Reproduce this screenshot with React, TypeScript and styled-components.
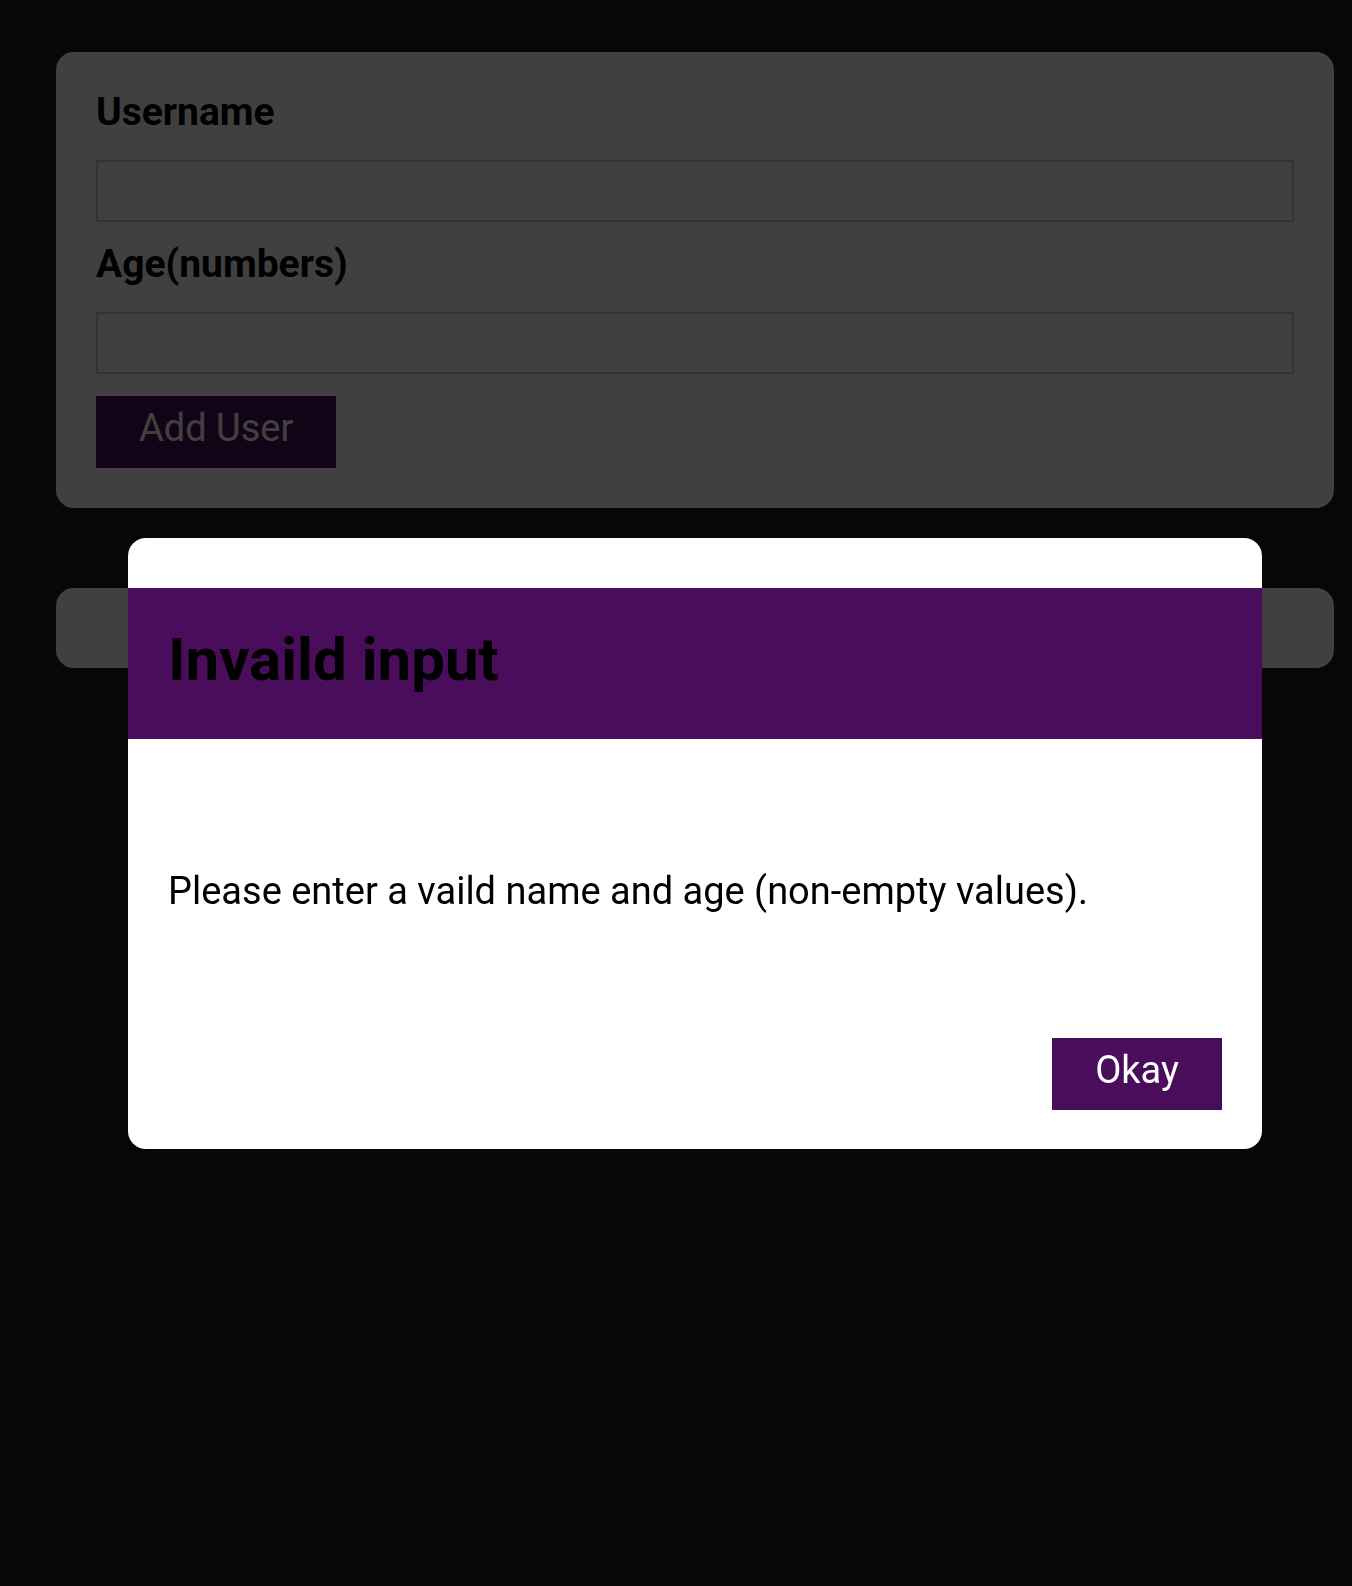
import styled, { createGlobalStyle } from "styled-components";

const GlobalStyle = createGlobalStyle`
  * {
    box-sizing: border-box;
  }

  html,
  body {
    margin: 0;
    padding: 0;
    background: #1f1f1f;
    font-family: Roboto, "Noto Sans CJK KR", sans-serif;
  }
`;

const Page = styled.div`
  min-height: 1586px;
  padding: 52px 18px 0 56px;
  display: flex;
  flex-direction: column;
  gap: 80px;
`;

const Card = styled.div`
  background: #ffffff;
  border-radius: 18px;
`;

const Form = styled.form`
  display: flex;
  flex-direction: column;
  padding: 37px 40px 40px;
`;

const Label = styled.label`
  display: block;
  font-size: 39px;
  line-height: 46px;
  font-weight: 700;
  color: #000;
  margin-bottom: 25px;
`;

const Input = styled.input`
  display: block;
  width: 100%;
  height: 62px;
  border: 2px solid #cccccc;
  background: #fff;
  font: inherit;
  margin-bottom: 19px;
  outline: none;
`;

const Button = styled.button`
  height: 72px;
  padding: 0 42px 8px;
  background: #4a0d5b;
  border: 1px solid #4a0d5b;
  color: #ffffff;
  font-family: inherit;
  font-size: 38px;
  line-height: 1;
  cursor: pointer;
`;

const ButtonRow = styled.div`
  display: flex;
  margin-top: 3px;
`;

const UserList = styled(Card)`
  height: 80px;
`;

const Backdrop = styled.div`
  position: fixed;
  inset: 0;
  background: rgba(0, 0, 0, 0.75);
  z-index: 10;
`;

const Modal = styled.div`
  position: fixed;
  top: 538px;
  left: 128px;
  width: 1134px;
  background: #ffffff;
  border-radius: 18px;
  overflow: hidden;
  padding-top: 50px;
  z-index: 100;
`;

const Header = styled.header`
  background: #4a0d5b;
  padding: 37px 40px 44px;

  h2 {
    margin: 0;
    font-size: 60px;
    line-height: 70px;
    font-weight: 700;
    color: #000;
  }
`;

const Content = styled.div`
  padding: 129px 40px 0;

  p {
    margin: 0;
    font-size: 38px;
    line-height: 46px;
    color: #000;
  }
`;

const Actions = styled.footer`
  display: flex;
  justify-content: flex-end;
  padding: 124px 40px 39px;
`;

export default function App() {
  return (
    <>
      <GlobalStyle />
      <Page>
        <Card>
          <Form onSubmit={(e) => e.preventDefault()}>
            <Label htmlFor="username">Username</Label>
            <Input id="username" type="text" />
            <Label htmlFor="age">Age(numbers)</Label>
            <Input id="age" type="number" />
            <ButtonRow>
              <Button type="submit">Add User</Button>
            </ButtonRow>
          </Form>
        </Card>
        <UserList />
      </Page>
      <Backdrop />
      <Modal>
        <Header>
          <h2>Invaild input</h2>
        </Header>
        <Content>
          <p>Please enter a vaild name and age (non-empty values).</p>
        </Content>
        <Actions>
          <Button>Okay</Button>
        </Actions>
      </Modal>
    </>
  );
}
